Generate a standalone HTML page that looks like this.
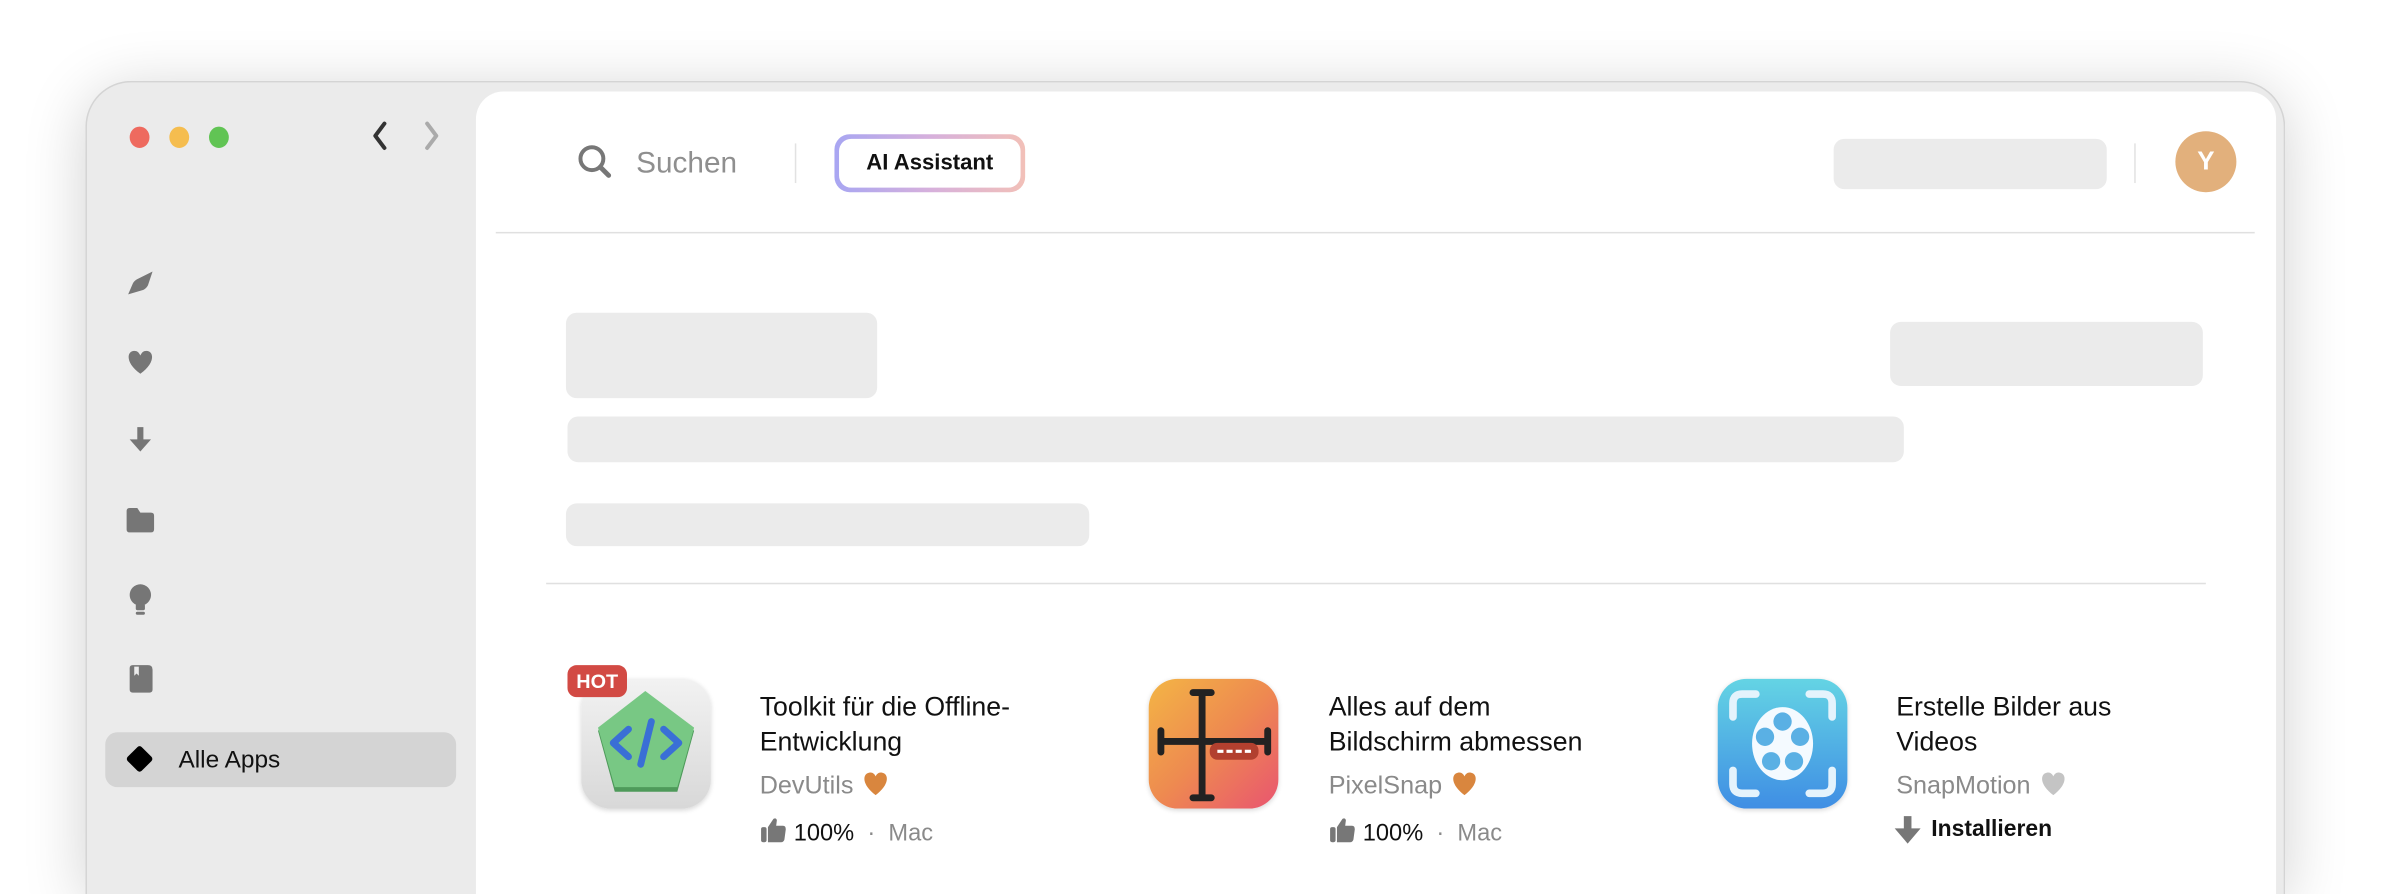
<!DOCTYPE html>
<html><head><meta charset="utf-8"><style>
html,body{margin:0;padding:0;width:2392px;height:894px;overflow:hidden;background:#fff}
#s{position:absolute;left:0;top:0;width:1568px;height:586px;transform:scale(1.52551);transform-origin:0 0;font-family:"Liberation Sans",sans-serif;overflow:hidden}
.a{position:absolute}
.win{left:56px;top:53px;width:1442px;height:533px;box-sizing:border-box;border-radius:30px 30px 0 0;background:#ebebeb;border:1px solid #d4d4d4;border-bottom:none;box-shadow:0 6px 40px rgba(0,0,0,.18)}
.main{left:312px;top:60px;width:1180px;height:526px;background:#fff;border-radius:18px 18px 0 0}
.dot{width:13px;height:14px;border-radius:50%;top:83px}
.sk{background:#ebebeb;border-radius:7px}
.t{font-size:17.5px;color:#111;line-height:23px}
.dev{font-size:16.5px;color:#8a8a8a}
.st{font-size:15.5px;color:#111}
.mac{color:#8a8a8a}
svg.i{vertical-align:-2px}
</style></head><body><div id="s">
<div class="a win"></div>
<div class="a main"></div>
<div class="a dot" style="left:85px;background:#ee6a5f"></div>
<div class="a dot" style="left:111px;background:#f5bd4f"></div>
<div class="a dot" style="left:137px;background:#61c454"></div>
<svg class="a" style="left:238px;top:78px" width="60" height="24"><path d="M14 3 L8 11 L14 19" stroke="#333" stroke-width="2.6" fill="none" stroke-linecap="round" stroke-linejoin="round"/><path d="M42 3 L48 11 L42 19" stroke="#aaa" stroke-width="2.6" fill="none" stroke-linecap="round" stroke-linejoin="round"/></svg>
<svg class="a" style="left:80px;top:170px" width="24" height="290" fill="#767676">
<path d="M4 23 L7 16 Q8 14 10 13 L20 8 L17 17 Q16 19 14 20 Z"/>
<path d="M12 75 C2 68 3 60 8 60 C10 60 11 61 12 63 C13 61 14 60 16 60 C21 60 22 68 12 75 Z"/>
<path d="M10 110 H14 V118 H19 L12 126 L5 118 H10 Z"/>
<path d="M3 165 Q3 163 5 163 H10 L12 166 H19 Q21 166 21 168 V177 Q21 179 19 179 H5 Q3 179 3 177 Z"/>
<circle cx="12" cy="220" r="7"/><rect x="9" y="226" width="6" height="4" rx="1"/><rect x="9" y="231" width="6" height="2" rx="1"/>
<path d="M5 268 Q5 266 7 266 H17 Q20 266 20 269 V282 Q20 284 18 284 H7 Q5 284 5 282 Z"/>
<path d="M8 267 H11 V273 L9.5 271.5 L8 273 Z" fill="#ebebeb"/>
</svg>
<div class="a" style="left:69px;top:480px;width:230px;height:36px;background:#d4d4d4;border-radius:8px"></div>
<div class="a" style="left:85px;top:491px;width:13px;height:13px;background:#000;transform:rotate(45deg);border-radius:2px"></div>
<div class="a" style="left:117px;top:490px;font-size:16px;color:#111">Alle Apps</div>
<svg class="a" style="left:377px;top:93px" width="28" height="28"><circle cx="11" cy="11" r="7.5" stroke="#777" stroke-width="2.6" fill="none"/><path d="M16.5 16.5 L22 22" stroke="#777" stroke-width="3.2" stroke-linecap="round"/></svg>
<div class="a" style="left:417px;top:96px;font-size:19.5px;color:#8f8f8f">Suchen</div>
<div class="a" style="left:521px;top:94px;width:1px;height:26px;background:#e2e2e2"></div>
<div class="a" style="left:547px;top:88px;width:125px;height:38px;border-radius:10px;background:linear-gradient(90deg,#a8a6f2,#d6b0dc,#f2c0b8)"></div>
<div class="a" style="left:550px;top:91px;width:119px;height:32px;border-radius:8px;background:#fff;text-align:center;line-height:33px;font-size:14.5px;font-weight:bold;color:#111">AI Assistant</div>
<div class="a sk" style="left:1202px;top:91px;width:179px;height:33px"></div>
<div class="a" style="left:1399px;top:94px;width:1px;height:26px;background:#e2e2e2"></div>
<div class="a" style="left:1426px;top:86px;width:40px;height:40px;border-radius:50%;background:#e2b07c;color:#fff;text-align:center;line-height:40px;font-size:17px;font-weight:bold">Y</div>
<div class="a" style="left:325px;top:152px;width:1153px;height:1px;background:#e0e0e0"></div>
<div class="a sk" style="left:371px;top:205px;width:204px;height:56px"></div>
<div class="a sk" style="left:1239px;top:211px;width:205px;height:42px"></div>
<div class="a sk" style="left:372px;top:273px;width:876px;height:30px"></div>
<div class="a sk" style="left:371px;top:330px;width:343px;height:28px"></div>
<div class="a" style="left:358px;top:382px;width:1088px;height:1px;background:#e0e0e0"></div>
<div class="a" style="left:381px;top:445px;width:85px;height:85px;border-radius:19px;background:linear-gradient(#f2f2f2,#d8d8d8);box-shadow:0 1px 3px rgba(0,0,0,.15)"></div>
<svg class="a" style="left:381px;top:445px" width="85" height="85"><path d="M42 10 L74 34 L63 74 L22 74 L11 34 Z" fill="#4e9a5a"/><path d="M42 8 L74 32 L63 71 L22 71 L11 32 Z" fill="#78c884"/><path d="M31 33 L21 42 L31 51 M54 33 L64 42 L54 51 M46 28 L39 56" stroke="#3a6fd6" stroke-width="4.5" fill="none" stroke-linecap="round" stroke-linejoin="round"/></svg>
<div class="a" style="left:372px;top:436px;width:39px;height:21px;background:#d24a44;border-radius:6px;color:#fff;font-weight:bold;font-size:13px;text-align:center;line-height:21px">HOT</div>
<div class="a t" style="left:498px;top:452px">Toolkit für die Offline-<br>Entwicklung</div>
<div class="a dev" style="left:498px;top:504px">DevUtils <svg class="i" width="20" height="18" viewBox="0 0 24 22"><path d="M12 21 C1 13 1 4 7 3 C9.5 2.6 11 4 12 6 C13 4 14.5 2.6 17 3 C23 4 23 13 12 21 Z" fill="#d9863e"/></svg></div>
<div class="a st" style="left:498px;top:535px"><svg class="i" width="18" height="18" viewBox="0 0 20 20"><rect x="1" y="8" width="4" height="11" rx="1.5" fill="#777"/><path d="M6 8 L10 2 Q12 1 12.5 3 L12 7 H17 Q19 7 19 9.5 L18 17 Q17.5 19 15.5 19 H6 Z" fill="#777"/></svg> 100% <span class="mac">&nbsp;·&nbsp; Mac</span></div>
<div class="a" style="left:753px;top:445px;width:85px;height:85px;border-radius:19px;background:linear-gradient(135deg,#f3b545,#ee8a50 50%,#e95570);box-shadow:0 1px 3px rgba(0,0,0,.15)"></div>
<svg class="a" style="left:753px;top:445px" width="85" height="85"><path d="M35 9 V78 M29 9 H41 M29 78 H41 M8 41 H78 M8 34 V48 M78 34 V48" stroke="#222" stroke-width="4.5" stroke-linecap="round"/><rect x="40" y="42" width="32" height="11" rx="5" fill="#b2402f"/><path d="M45 47.5 H67" stroke="#fff" stroke-width="2" stroke-dasharray="4 2"/></svg>
<div class="a t" style="left:871px;top:452px">Alles auf dem<br>Bildschirm abmessen</div>
<div class="a dev" style="left:871px;top:504px">PixelSnap <svg class="i" width="20" height="18" viewBox="0 0 24 22"><path d="M12 21 C1 13 1 4 7 3 C9.5 2.6 11 4 12 6 C13 4 14.5 2.6 17 3 C23 4 23 13 12 21 Z" fill="#d9863e"/></svg></div>
<div class="a st" style="left:871px;top:535px"><svg class="i" width="18" height="18" viewBox="0 0 20 20"><rect x="1" y="8" width="4" height="11" rx="1.5" fill="#777"/><path d="M6 8 L10 2 Q12 1 12.5 3 L12 7 H17 Q19 7 19 9.5 L18 17 Q17.5 19 15.5 19 H6 Z" fill="#777"/></svg> 100% <span class="mac">&nbsp;·&nbsp; Mac</span></div>
<div class="a" style="left:1126px;top:445px;width:85px;height:85px;border-radius:19px;background:linear-gradient(#64d4e4,#3f8ee4);box-shadow:0 1px 3px rgba(0,0,0,.15)"></div>
<svg class="a" style="left:1126px;top:445px" width="85" height="85"><path d="M10 25 V16 Q10 10 16 10 H25 M60 10 H69 Q75 10 75 16 V25 M75 60 V69 Q75 75 69 75 H60 M25 75 H16 Q10 75 10 69 V60" stroke="#e4f3fc" stroke-width="5" fill="none" stroke-linecap="round"/><ellipse cx="42.5" cy="42.5" rx="20" ry="24" fill="#f4faff"/><g fill="#5ab0e4"><circle cx="42.5" cy="28" r="6"/><circle cx="54" cy="38" r="6"/><circle cx="50" cy="54" r="6"/><circle cx="35" cy="54" r="6"/><circle cx="31" cy="38" r="6"/></g></svg>
<div class="a t" style="left:1243px;top:452px">Erstelle Bilder aus<br>Videos</div>
<div class="a dev" style="left:1243px;top:504px">SnapMotion <svg class="i" width="20" height="18" viewBox="0 0 24 22"><path d="M12 21 C1 13 1 4 7 3 C9.5 2.6 11 4 12 6 C13 4 14.5 2.6 17 3 C23 4 23 13 12 21 Z" fill="#c4c4c4"/></svg></div>
<svg class="a" style="left:1241px;top:534px" width="20" height="20"><path d="M7 1 H12 V9 H18 L9.5 19 L1 9 H7 Z" fill="#777"/></svg>
<div class="a st" style="left:1266px;top:535px;font-weight:bold;font-size:15px">Installieren</div>
</div></body></html>
